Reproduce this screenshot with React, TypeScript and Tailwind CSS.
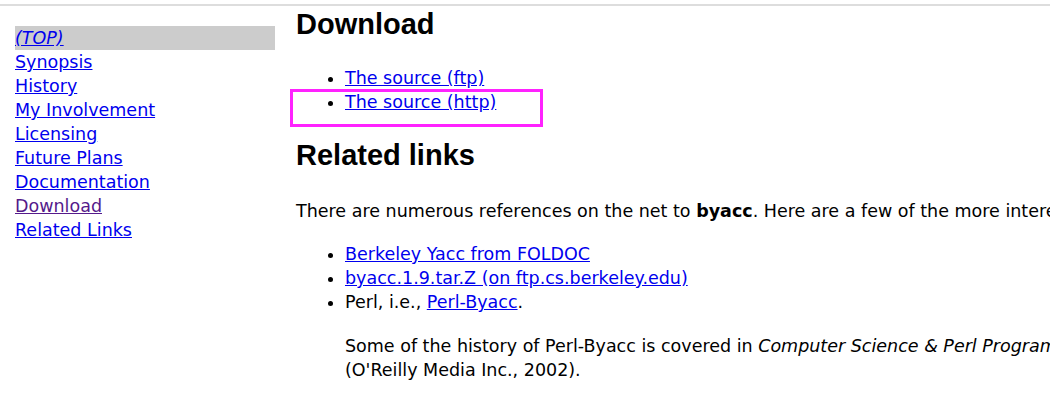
import React from 'react';

const nav = [
  { label: 'Synopsis' },
  { label: 'History' },
  { label: 'My Involvement' },
  { label: 'Licensing' },
  { label: 'Future Plans' },
  { label: 'Documentation' },
  { label: 'Download', visited: true },
  { label: 'Related Links' },
];

const body = { fontFamily: '"DejaVu Sans", Tahoma, sans-serif' };
const head = { fontFamily: '"Liberation Sans", Arial, sans-serif' };

export default function App() {
  return (
    <div className="w-[1050px] h-[402px] overflow-hidden bg-white text-black text-[17.5px] leading-[24px]" style={body}>
      <div className="h-[4px]" />
      <div className="h-[2px] bg-[#dddddd]" />
      <div className="flex">
        {/* Sidebar */}
        <div className="ml-[15px] w-[260px] shrink-0 pt-[20px] flex flex-col">
          <a href="#" className="bg-[#cccccc] italic text-[#0000ee] underline">(TOP)</a>
          {nav.map((n) => (
            <a key={n.label} href="#" className={n.visited ? 'text-[#551a8b] underline' : 'text-[#0000ee] underline'}>
              {n.label}
            </a>
          ))}
        </div>

        {/* Main */}
        <div className="ml-[21px] whitespace-nowrap">
          <h2 className="text-[29px] leading-[32px] font-bold mt-[2px]" style={head}>Download</h2>
          <ul className="relative list-disc pl-[49px] mt-[26px]">
            <li><a href="#" className="text-[#0000ee] underline">The source (ftp)</a></li>
            <li><a href="#" className="text-[#0000ee] underline">The source (http)</a></li>
            <div className="absolute left-[-6px] top-[23px] w-[253px] h-[38px] border-[3px] border-[#ff22ff]" />
          </ul>
          <h2 className="text-[29px] leading-[32px] font-bold mt-[25px]" style={head}>Related links</h2>
          <p className="mt-[28px]">
            There are numerous references on the net to <b>byacc</b>. Here are a few of the more interesting ones:
          </p>
          <ul className="list-disc pl-[49px] mt-[19px]">
            <li><a href="#" className="text-[#0000ee] underline">Berkeley Yacc from FOLDOC</a></li>
            <li><a href="#" className="text-[#0000ee] underline">byacc.1.9.tar.Z (on ftp.cs.berkeley.edu)</a></li>
            <li>
              Perl, i.e., <a href="#" className="text-[#0000ee] underline">Perl-Byacc</a>.
              <p className="mt-[20px]">
                Some of the history of Perl-Byacc is covered in <i>Computer Science &amp; Perl Programming</i>
                <br />
                (O'Reilly Media Inc., 2002).
              </p>
            </li>
          </ul>
        </div>
      </div>
    </div>
  );
}
